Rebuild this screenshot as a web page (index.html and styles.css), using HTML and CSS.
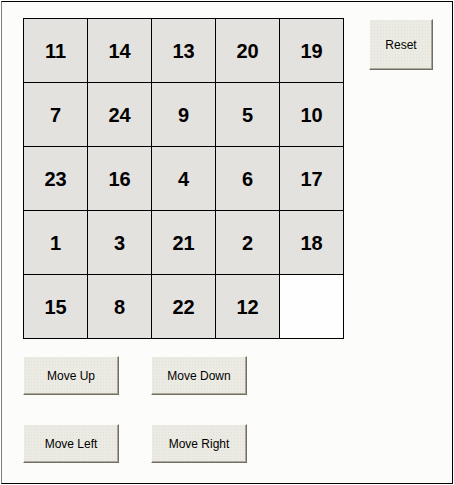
FILE: index.html
```html
<!DOCTYPE html>
<html>
<head>
<meta charset="utf-8">
<link rel="stylesheet" href="styles.css">
</head>
<body>
<div class="frame">
  <div class="top">
    <div class="board">
      <div class="cell">11</div><div class="cell">14</div><div class="cell">13</div><div class="cell">20</div><div class="cell">19</div>
      <div class="cell">7</div><div class="cell">24</div><div class="cell">9</div><div class="cell">5</div><div class="cell">10</div>
      <div class="cell">23</div><div class="cell">16</div><div class="cell">4</div><div class="cell">6</div><div class="cell">17</div>
      <div class="cell">1</div><div class="cell">3</div><div class="cell">21</div><div class="cell">2</div><div class="cell">18</div>
      <div class="cell">15</div><div class="cell">8</div><div class="cell">22</div><div class="cell">12</div><div class="cell empty"></div>
    </div>
    <button class="btn reset">Reset</button>
  </div>
  <div class="controls">
    <button class="btn move">Move Up</button>
    <button class="btn move">Move Down</button>
    <button class="btn move">Move Left</button>
    <button class="btn move">Move Right</button>
  </div>
</div>
</body>
</html>
```
FILE: styles.css
```css
html, body {
  margin: 0;
  padding: 0;
  background: #ffffff;
}
body {
  padding: 1px 0 0 1px;
  font-family: "Liberation Sans", Arial, sans-serif;
}
.frame {
  box-sizing: border-box;
  width: 452px;
  height: 483px;
  background: #fcfdfb;
  border-top: 1px solid #000;
  border-right: 1px solid #000;
  border-bottom: 1px solid #000;
  border-left: 1px solid #808080;
  padding: 16px 0 0 21px;
}
.top {
  display: flex;
  align-items: flex-start;
  gap: 25px;
}
.board {
  display: grid;
  grid-template-columns: repeat(5, 63px);
  grid-auto-rows: 63px;
  gap: 1px;
  padding: 1px;
  background: #000;
}
.cell {
  background: #e3e2de;
  display: flex;
  align-items: center;
  justify-content: center;
  font-weight: bold;
  font-size: 20px;
  color: #000;
  padding-top: 2px;
  box-sizing: border-box;
}
.cell.empty {
  background: #fefefe;
}
.btn {
  box-sizing: border-box;
  margin: 0;
  padding: 0;
  font-family: "Liberation Sans", Arial, sans-serif;
  font-size: 12px;
  color: #000;
  background-color: #ecebe3;
  background-image: radial-gradient(#e2e0d6 0.6px, transparent 0.8px);
  background-size: 3px 3px;
  border-top: 1px solid #fbfbf8;
  border-left: 1px solid #fbfbf8;
  border-right: 1px solid #716f64;
  border-bottom: 1px solid #716f64;
  box-shadow: inset -1px -1px 0 #aca899;
}
.reset {
  width: 64px;
  height: 51px;
  margin-top: 1px;
}
.controls {
  display: grid;
  grid-template-columns: 96px 96px;
  grid-auto-rows: 39px;
  column-gap: 32px;
  row-gap: 29px;
  margin-top: 17px;
}
.move {
  width: 96px;
  height: 39px;
}
```
